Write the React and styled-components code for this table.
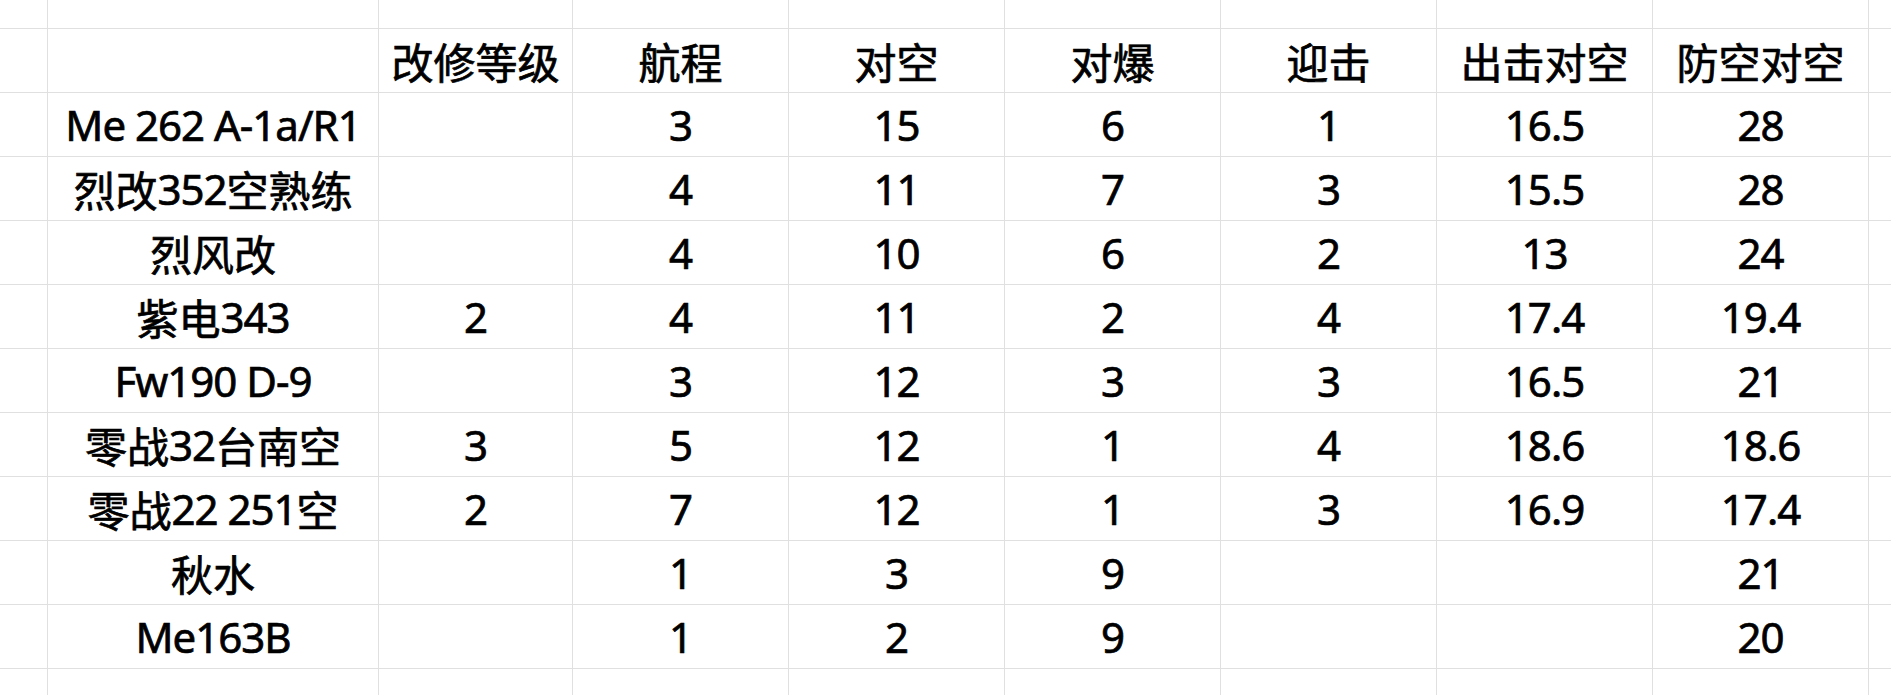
import React from "react";
import styled, { createGlobalStyle } from "styled-components";

const GlobalStyle = createGlobalStyle`
    html, body {
        margin: 0;
        padding: 0;
        background: #ffffff;
    }
`;

const Sheet = styled.div`
    display: grid;
    grid-template-columns: 47px 330px 193px repeat(6, 215px) 1fr;
    grid-template-rows: 28px repeat(10, 63px) 1fr;
    gap: 1px;
    background-color: #e0e0e0;
    width: 100vw;
    height: 100vh;
    overflow: hidden;
`;

const Cell = styled.div`
    background-color: #ffffff;
    display: flex;
    align-items: center;
    justify-content: center;
    white-space: pre;
    overflow: hidden;
    color: #000000;
    font-family: "Noto Sans", "Noto Sans CJK SC", sans-serif;
    font-size: 42px;
    font-weight: 400;
    letter-spacing: -1px;
    -webkit-text-stroke: 0.7px #000000;
`;

// latin digits are a little tighter than the chinese glyphs
const Han = styled.span`
    letter-spacing: 0;
`;

const headers = ["", "", "改修等级", "航程", "对空", "对爆", "迎击", "出击对空", "防空对空", ""];

const rows = [
    ["Me 262 A-1a/R1", "", "3", "15", "6", "1", "16.5", "28"],
    ["烈改352空熟练", "", "4", "11", "7", "3", "15.5", "28"],
    ["烈风改", "", "4", "10", "6", "2", "13", "24"],
    ["紫电343", "2", "4", "11", "2", "4", "17.4", "19.4"],
    ["Fw190 D-9", "", "3", "12", "3", "3", "16.5", "21"],
    ["零战32台南空", "3", "5", "12", "1", "4", "18.6", "18.6"],
    ["零战22 251空", "2", "7", "12", "1", "3", "16.9", "17.4"],
    ["秋水", "", "1", "3", "9", "", "", "21"],
    ["Me163B", "", "1", "2", "9", "", "", "20"],
];

const renderText = (text) =>
    text.split(/([\u4e00-\u9fff]+)/).filter(Boolean).map((part, i) =>
        /[\u4e00-\u9fff]/.test(part) ? <Han key={i}>{part}</Han> : <span key={i}>{part}</span>
    );

function App() {
    const blank = Array.from({ length: 10 });
    return (
        <>
            <GlobalStyle />
            <Sheet>
                {blank.map((_, i) => <Cell key={"top" + i} />)}
                {headers.map((h, i) => <Cell key={"h" + i}>{renderText(h)}</Cell>)}
                {rows.map((r, ri) => (
                    <React.Fragment key={ri}>
                        <Cell />
                        {r.map((v, ci) => <Cell key={ci}>{renderText(v)}</Cell>)}
                        <Cell />
                    </React.Fragment>
                ))}
                {blank.map((_, i) => <Cell key={"bot" + i} />)}
            </Sheet>
        </>
    );
}

export default App;
